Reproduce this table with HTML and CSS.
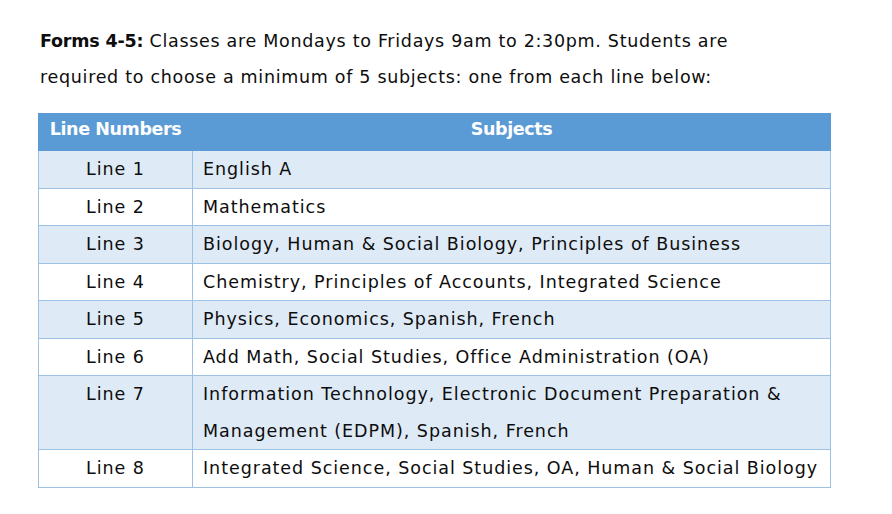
FILE: index.html
```html
<!DOCTYPE html>
<html>
<head>
<meta charset="utf-8">
<link rel="stylesheet" href="styles.css">
</head>
<body>
<div class="page">
  <p class="intro"><strong>Forms 4-5:</strong> Classes are Mondays to Fridays 9am to 2:30pm. Students are required to choose a minimum of 5 subjects: one from each line below:</p>
  <table class="lines">
    <thead>
      <tr><th class="c1">Line Numbers</th><th class="c2">Subjects</th></tr>
    </thead>
    <tbody>
      <tr class="odd"><td class="c1">Line 1</td><td class="c2">English A</td></tr>
      <tr><td class="c1">Line 2</td><td class="c2">Mathematics</td></tr>
      <tr class="odd"><td class="c1">Line 3</td><td class="c2">Biology, Human &amp; Social Biology, Principles of Business</td></tr>
      <tr><td class="c1">Line 4</td><td class="c2">Chemistry, Principles of Accounts, Integrated Science</td></tr>
      <tr class="odd"><td class="c1">Line 5</td><td class="c2">Physics, Economics, Spanish, French</td></tr>
      <tr><td class="c1">Line 6</td><td class="c2">Add Math, Social Studies, Office Administration (OA)</td></tr>
      <tr class="odd"><td class="c1">Line 7</td><td class="c2">Information Technology, Electronic Document Preparation &amp; Management (EDPM), Spanish, French</td></tr>
      <tr><td class="c1">Line 8</td><td class="c2">Integrated Science, Social Studies, OA, Human &amp; Social Biology</td></tr>
    </tbody>
  </table>
</div>
</body>
</html>
```
FILE: styles.css
```css
html, body {
  margin: 0;
  padding: 0;
  background: #ffffff;
}
.page {
  padding: 23px 61px 0 38px;
  font-family: "DejaVu Sans", sans-serif;
  font-size: 17.5px;
  color: #0d0d0d;
}
.intro {
  margin: 0 0 18px 2px;
  line-height: 36px;
  width: 760px;
  letter-spacing: 0.7px;
}
.intro strong {
  font-weight: bold;
  letter-spacing: -0.2px;
}
.lines {
  border-collapse: collapse;
  width: 793px;
  line-height: 36.5px;
  letter-spacing: 0.95px;
}
.lines th {
  background: #5b9bd5;
  color: #ffffff;
  font-weight: bold;
  text-align: center;
  padding: 0;
  height: 36px;
  line-height: 30px;
  vertical-align: top;
  letter-spacing: -0.4px;
  border: 1px solid #5b9bd5;
}
.lines td {
  border: 1px solid #9cc2e5;
  padding: 0 10px;
  vertical-align: top;
}
.lines .c1 {
  width: 133px;
  text-align: center;
}
.lines td.c2 {
  text-align: left;
}
.lines tr.odd td {
  background: #deeaf6;
}
```
